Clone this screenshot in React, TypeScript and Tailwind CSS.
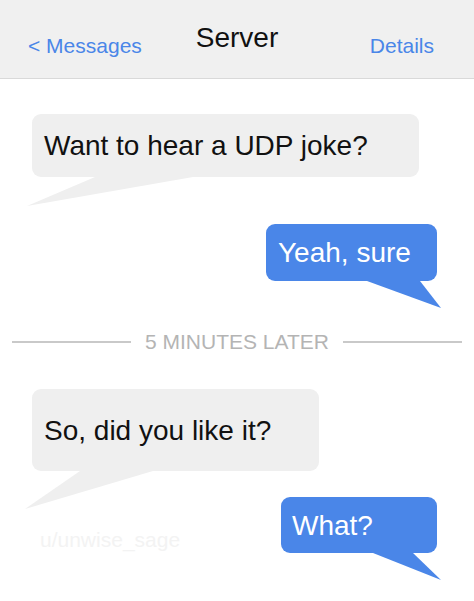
type Side = "left" | "right";

// tail points are relative to the bubble's bottom-left corner
function Bubble({
  side,
  text,
  className,
  tail,
}: {
  side: Side;
  text: string;
  className: string;
  tail: [number, number][];
}) {
  const fill = side === "left" ? "#efefef" : "#4a86e8";
  const pts = tail.map(([x, y]) => `${x + 20},${y}`).join(" ");
  return (
    <div
      className={`relative flex items-center rounded-[9px] text-[28px] leading-[31px] ${className} ${
        side === "left" ? "self-start bg-[#efefef] text-[#111]" : "self-end bg-[#4a86e8] text-white"
      }`}
    >
      <span>{text}</span>
      <svg
        className="absolute left-[-20px] top-full overflow-visible"
        width="240"
        height="40"
        viewBox="0 0 240 40"
      >
        <polygon points={pts} fill={fill} />
      </svg>
    </div>
  );
}

export default function App() {
  return (
    <div className="relative h-[601px] w-[474px] overflow-hidden bg-white font-['Liberation_Sans',Arial,sans-serif]">
      <header className="grid h-[79px] grid-cols-[1fr_auto_1fr] items-start border-b border-[#d9d9d9] bg-[#f0f0f0] px-[28px]">
        <span className="mt-[34px] text-[21px] leading-[24px] text-[#4a86e8]">&lt; Messages</span>
        <span className="mt-[23px] text-[28px] leading-[30px] text-[#111]">Server</span>
        <span className="mr-[12px] mt-[34px] justify-self-end text-[21px] leading-[24px] text-[#4a86e8]">Details</span>
      </header>

      <div className="flex flex-col">
        <Bubble
          side="left"
          text="Want to hear a UDP joke?"
          className="ml-[32px] mt-[35px] h-[63px] w-[387px] pl-[12px]"
          tail={[[63, 0], [161, 0], [-5, 29]]}
        />
        <Bubble
          side="right"
          text="Yeah, sure"
          className="mr-[37px] mt-[47px] h-[57px] w-[171px] pl-[12px]"
          tail={[[101, 0], [154, 0], [175, 27]]}
        />

        <div className="mt-[49px] flex items-center gap-[14px] px-[12px]">
          <div className="h-[2px] flex-1 bg-[#c9c9c9]" />
          <span className="text-[21px] leading-[24px] text-[#b4b4b4]">5 MINUTES LATER</span>
          <div className="h-[2px] flex-1 bg-[#c9c9c9]" />
        </div>

        <Bubble
          side="left"
          text="So, did you like it?"
          className="ml-[32px] mt-[35px] h-[82px] w-[287px] pl-[12px]"
          tail={[[48, 0], [121, 0], [-7, 38]]}
        />
        <Bubble
          side="right"
          text="What?"
          className="mr-[37px] mt-[26px] h-[56px] w-[156px] pl-[11px]"
          tail={[[92, 0], [132, 0], [160, 27]]}
        />
      </div>

      <span className="absolute left-[40px] top-[528px] text-[21px] leading-[24px] text-[#f3f3f3]">u/unwise_sage</span>
    </div>
  );
}
